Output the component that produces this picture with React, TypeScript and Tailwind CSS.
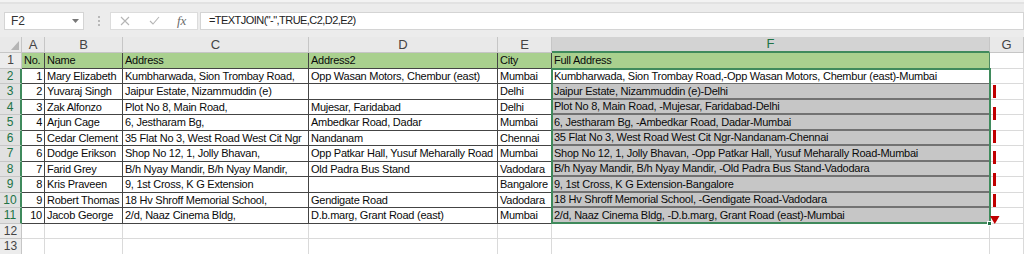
import React from "react";

type Rec = { no: number; name: string; addr: string; addr2: string; city: string; full: string };

const records: Rec[] = [
  { no: 1, name: "Mary Elizabeth", addr: "Kumbharwada, Sion Trombay Road,", addr2: "Opp Wasan Motors, Chembur (east)", city: "Mumbai", full: "Kumbharwada, Sion Trombay Road,-Opp Wasan Motors, Chembur (east)-Mumbai" },
  { no: 2, name: "Yuvaraj Singh", addr: "Jaipur Estate, Nizammuddin (e)", addr2: "", city: "Delhi", full: "Jaipur Estate, Nizammuddin (e)-Delhi" },
  { no: 3, name: "Zak Alfonzo", addr: "Plot No 8, Main Road,", addr2: "Mujesar, Faridabad", city: "Delhi", full: "Plot No 8, Main Road, -Mujesar, Faridabad-Delhi" },
  { no: 4, name: "Arjun Cage", addr: "6, Jestharam Bg,", addr2: "Ambedkar Road, Dadar", city: "Mumbai", full: "6, Jestharam Bg, -Ambedkar Road, Dadar-Mumbai" },
  { no: 5, name: "Cedar Clement", addr: "35 Flat No 3, West Road West Cit Ngr", addr2: "Nandanam", city: "Chennai", full: "35 Flat No 3, West Road West Cit Ngr-Nandanam-Chennai" },
  { no: 6, name: "Dodge Erikson", addr: "Shop No 12, 1, Jolly Bhavan,", addr2: "Opp Patkar Hall, Yusuf Meharally Road", city: "Mumbai", full: "Shop No 12, 1, Jolly Bhavan, -Opp Patkar Hall, Yusuf Meharally Road-Mumbai" },
  { no: 7, name: "Farid Grey", addr: "B/h Nyay Mandir, B/h Nyay Mandir,", addr2: "Old Padra Bus Stand", city: "Vadodara", full: "B/h Nyay Mandir, B/h Nyay Mandir, -Old Padra Bus Stand-Vadodara" },
  { no: 8, name: "Kris Praveen", addr: "9, 1st Cross, K G Extension", addr2: "", city: "Bangalore", full: "9, 1st Cross, K G Extension-Bangalore" },
  { no: 9, name: "Robert Thomas", addr: "18 Hv Shroff Memorial School,", addr2: "Gendigate Road", city: "Vadodara", full: "18 Hv Shroff Memorial School, -Gendigate Road-Vadodara" },
  { no: 10, name: "Jacob George", addr: "2/d, Naaz Cinema Bldg,", addr2: "D.b.marg, Grant Road (east)", city: "Mumbai", full: "2/d, Naaz Cinema Bldg, -D.b.marg, Grant Road (east)-Mumbai" },
];

const cols = ["A", "B", "C", "D", "E", "F", "G"];

function Cell({ className, children }: { className: string; children?: React.ReactNode }) {
  return (
    <div className={"flex h-full shrink-0 items-center overflow-hidden whitespace-pre border-r border-b px-[2px] " + className}>
      {children}
    </div>
  );
}

function FormulaBar() {
  return (
    <div className="flex h-[33px] items-center bg-[#ececec]">
      <div className="ml-[4px] flex h-[18px] w-[80px] items-center justify-between border border-[#d4d4d4] bg-white pl-[6px] pr-[4px] text-[12px] text-[#333]">
        <span>F2</span>
        <svg width="7" height="4" viewBox="0 0 7 4">
          <path d="M0 0h7L3.5 4z" fill="#777" />
        </svg>
      </div>
      <div className="ml-[12px] flex w-[6px] flex-col items-center gap-[2px]">
        <span className="h-[2px] w-[2px] bg-[#b8b8b8]" />
        <span className="h-[2px] w-[2px] bg-[#b8b8b8]" />
        <span className="h-[2px] w-[2px] bg-[#b8b8b8]" />
      </div>
      <div className="ml-[8px] flex h-[18px] w-[88px] items-center border border-[#dcdcdc] bg-white">
        <svg className="ml-[9px]" width="10" height="10" viewBox="0 0 10 10">
          <path d="M1 1l8 8M9 1l-8 8" stroke="#b5b5b5" strokeWidth="1.1" />
        </svg>
        <svg className="ml-[19px]" width="11" height="9" viewBox="0 0 11 9">
          <path d="M1 5l3 3 6-7" stroke="#b5b5b5" strokeWidth="1.1" fill="none" />
        </svg>
        <span className="ml-[17px] font-['Liberation_Serif'] text-[13px] italic text-[#6a6a6a]">fx</span>
      </div>
      <div className="ml-[2px] flex h-[18px] flex-1 items-center border border-[#d4d4d4] bg-white pl-[8px] text-[11px] tracking-[-0.55px] text-[#222]">
        =TEXTJOIN("-",TRUE,C2,D2,E2)
      </div>
    </div>
  );
}

const widths = ["w-[23px]", "w-[78px]", "w-[186px]", "w-[189px]", "w-[54px]", "w-[438px]", "w-[34px]"];

export default function App() {
  return (
    <div className="relative h-[254px] w-[1024px] overflow-hidden bg-white font-['Liberation_Sans',sans-serif] text-[#0a0a0a]">
      <div className="h-[4px] border-t-[2px] border-[#f3f3f3] bg-[#e2e2e2]" />
      <FormulaBar />

      {/* column headers */}
      <div className="flex h-[16px] bg-[#e9e9e9] text-[13px] text-[#444]">
        <div className="relative h-full w-[22px] shrink-0 border-r border-b border-[#c6c6c6]">
          <svg className="absolute right-[2px] bottom-[2px]" width="8" height="9" viewBox="0 0 8 9">
            <path d="M8 0v9H0z" fill="#b5b5b5" />
          </svg>
        </div>
        {cols.map((c, i) => (
          <div
            key={c}
            className={
              "flex h-full shrink-0 items-center justify-center border-r " +
              widths[i] +
              (c === "F"
                ? " border-b-2 border-r-[#c6c6c6] border-b-[#3f8a5c] bg-[#d3d3d3] text-[#217346]"
                : " border-b border-[#c6c6c6]") +
              (c === "G" ? " flex-1" : "")
            }
          >
            {c}
          </div>
        ))}
      </div>

      <div className="text-[11px] tracking-[-0.25px]">
        {/* row 1 */}
        <div className="flex h-[15.5px]">
          <div className="flex h-full w-[22px] shrink-0 items-center justify-center border-r border-b border-[#c6c6c6] bg-[#ececec] text-[12px] tracking-normal text-[#444]">1</div>
          <Cell className="w-[23px] border-[#444] bg-[#a9d08e]">No.</Cell>
          <Cell className="w-[78px] border-[#444] bg-[#a9d08e]">Name</Cell>
          <Cell className="w-[186px] border-[#444] bg-[#a9d08e]">Address</Cell>
          <Cell className="w-[189px] border-[#444] bg-[#a9d08e]">Address2</Cell>
          <Cell className="w-[54px] border-[#444] bg-[#a9d08e]">City</Cell>
          <Cell className="w-[438px] border-[#4d8a62] bg-[#a9d08e]">Full Address</Cell>
          <Cell className="flex-1 border-[#dadada]" />
        </div>

        {records.map((r, idx) => (
          <div key={r.no} className="flex h-[15.5px]">
            <div className="flex h-full w-[22px] shrink-0 items-center justify-center border-r-2 border-b border-r-[#3f8a5c] border-b-[#c6c6c6] bg-[#e1e1e1] text-[12px] tracking-normal text-[#217346]">
              {r.no + 1}
            </div>
            <Cell className="w-[23px] justify-end border-[#444]">{r.no}</Cell>
            <Cell className="w-[78px] border-[#444]">{r.name}</Cell>
            <Cell className="w-[186px] border-[#444]">{r.addr}</Cell>
            <Cell className="w-[189px] border-[#444]">{r.addr2}</Cell>
            <Cell className="w-[54px] border-[#444]">{r.city}</Cell>
            {idx === 0 ? (
              <Cell className="w-[438px] border-[#6f6f6f]">{r.full}</Cell>
            ) : (
              <Cell className="w-[438px] border-b-2 border-[#727272] bg-[#c6c6c6]">{r.full}</Cell>
            )}
            <Cell className="flex-1 border-[#dadada]" />
          </div>
        ))}

        {[12, 13].map((n) => (
          <div key={n} className="flex h-[15.5px]">
            <div className="flex h-full w-[22px] shrink-0 items-center justify-center border-r border-b border-[#c6c6c6] bg-[#ececec] text-[12px] tracking-normal text-[#444]">
              {n}
            </div>
            {widths.map((w, i) => (
              <Cell key={i} className={w + " border-[#dadada]" + (i === 6 ? " flex-1" : "")} />
            ))}
          </div>
        ))}
      </div>

      {/* selection F2:F11 */}
      <div className="pointer-events-none absolute top-[68px] left-[551px] h-[156px] w-[440px] border-2 border-[#3f8a5c]" />
      <div className="absolute top-[221px] left-[987px] h-[5px] w-[5px] border border-white bg-[#217346]" />

      {/* red dashed arrow */}
      <svg className="pointer-events-none absolute top-[84px] left-[989px]" width="12" height="142" viewBox="0 0 12 142">
        {[1, 23, 46, 67, 89, 110].map((y) => (
          <rect key={y} x="4" y={y} width="3" height="13" fill="#c00000" />
        ))}
        <path d="M1 132h9.5l-4.75 8z" fill="#c00000" />
      </svg>
    </div>
  );
}
